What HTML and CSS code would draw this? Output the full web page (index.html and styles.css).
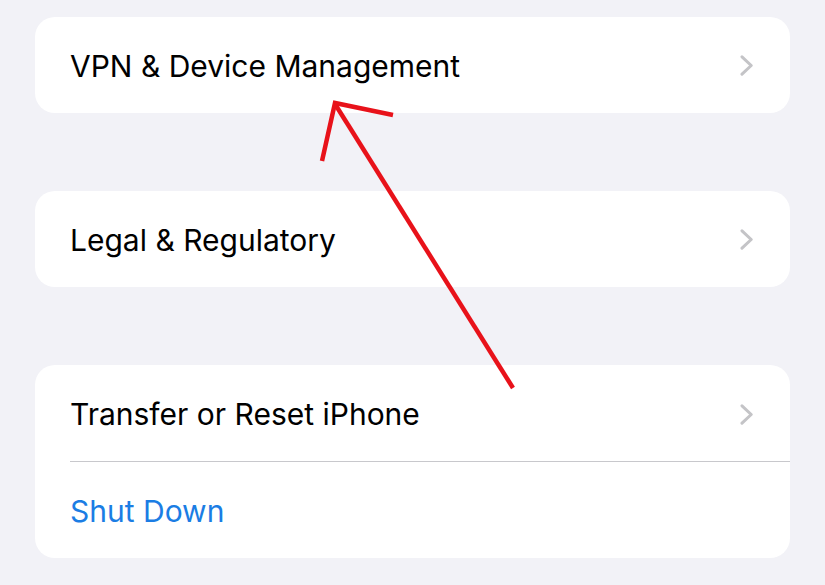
FILE: index.html
```html
<!DOCTYPE html>
<html>
<head>
<meta charset="utf-8">
<link rel="stylesheet" href="styles.css">
</head>
<body>
<div class="page">
  <div class="group">
    <div class="row"><span class="label">VPN &amp; Device Management</span><span class="chev"><svg width="14" height="21" viewBox="0 0 14 21"><path d="M2 1.8 L11.2 10.5 L2 19.2" fill="none" stroke="#c4c4c7" stroke-width="3" stroke-linecap="round" stroke-linejoin="round"/></svg></span></div>
  </div>
  <div class="group">
    <div class="row"><span class="label">Legal &amp; Regulatory</span><span class="chev"><svg width="14" height="21" viewBox="0 0 14 21"><path d="M2 1.8 L11.2 10.5 L2 19.2" fill="none" stroke="#c4c4c7" stroke-width="3" stroke-linecap="round" stroke-linejoin="round"/></svg></span></div>
  </div>
  <div class="group">
    <div class="row divided"><span class="label">Transfer or Reset iPhone</span><span class="chev"><svg width="14" height="21" viewBox="0 0 14 21"><path d="M2 1.8 L11.2 10.5 L2 19.2" fill="none" stroke="#c4c4c7" stroke-width="3" stroke-linecap="round" stroke-linejoin="round"/></svg></span></div>
    <div class="row"><span class="label link">Shut Down</span></div>
  </div>
</div>
<svg class="annot" width="825" height="585" viewBox="0 0 825 585">
  <g fill="none" stroke="#e8121a" stroke-width="4.5" stroke-linecap="butt">
    <line x1="513" y1="388" x2="335" y2="104"/>
    <polyline points="393,115 335,103 322,161" stroke-linejoin="miter"/>
  </g>
</svg>
</body>
</html>
```
FILE: styles.css
```css
html, body {
  margin: 0;
  padding: 0;
  background: #f2f2f7;
}
body {
  width: 825px;
  height: 585px;
  overflow: hidden;
  position: relative;
  font-family: Inter, "Noto Sans", "Liberation Sans", sans-serif;
}
.page {
  display: flex;
  flex-direction: column;
  gap: 78px;
  padding: 17px 35px 0 35px;
}
.group {
  background: #ffffff;
  border-radius: 20px;
  overflow: hidden;
}
.row {
  height: 96px;
  display: flex;
  align-items: center;
  justify-content: space-between;
  padding: 1px 36px 0 35px;
  box-sizing: border-box;
  position: relative;
}
.row.divided {
  height: 97px;
}
.row.divided::after {
  content: "";
  position: absolute;
  left: 35px;
  right: 0;
  bottom: 0;
  height: 1px;
  background: #c8c8cc;
}
.label {
  font-size: 30px;
  color: #000000;
  letter-spacing: 0;
}
.label.link {
  color: #1b7de4;
}
.chev {
  display: flex;
  align-items: center;
}
.annot {
  position: absolute;
  left: 0;
  top: 0;
  pointer-events: none;
}
```
